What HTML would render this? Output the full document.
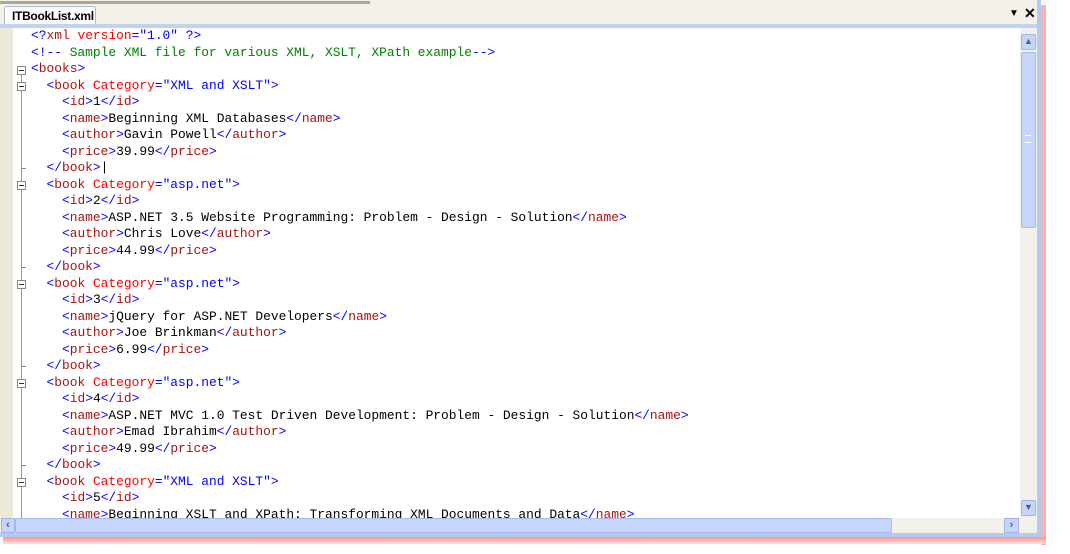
<!DOCTYPE html>
<html><head><meta charset="utf-8"><style>
*{margin:0;padding:0;box-sizing:border-box}
body{width:1070px;height:554px;background:#fff;position:relative;overflow:hidden;font-family:"Liberation Sans",sans-serif}
.abs{position:absolute}
#code{position:absolute;left:31px;top:28px;font-family:"Liberation Mono",monospace;font-size:12.9px;line-height:16.5px;white-space:pre;color:#000}
.b{color:#0000ff}.t{color:#a31515}.a{color:#ff0000}.c{color:#008000}
.fold{position:absolute;left:17px;width:9px;height:9px;border:1px solid #888;background:#fff}
.fold:after{content:"";position:absolute;left:1px;top:3px;width:5px;height:1px;background:#333}
.tick{position:absolute;left:21px;width:5px;height:1px;background:#888}
</style></head><body>
<!-- header -->
<div class="abs" style="left:0;top:0;width:1037px;height:25px;background:#f4f2e8"></div>
<div class="abs" style="left:0;top:1px;width:370px;height:3px;background:#aca899"></div>
<div class="abs" style="left:4px;top:6px;width:92px;height:21px;background:#fcfcfe;border:1px solid #a8b8d8;border-bottom:none;border-radius:3px 3px 0 0"></div>
<div class="abs" style="left:12px;top:9px;font-size:12px;font-weight:bold;color:#000;letter-spacing:-0.3px">ITBookList.xml</div>
<div class="abs" style="left:1009px;top:8px;font-size:10px;color:#000">▼</div>
<div class="abs" style="left:1024px;top:5px;font-size:14px;font-weight:bold;color:#000">✕</div>
<div class="abs" style="left:0;top:24px;width:1037px;height:4px;background:#c2d3f0"></div>
<!-- gutter -->
<div class="abs" style="left:0;top:28px;width:13px;height:490px;background:#ece9d8"></div>
<div class="abs" style="left:21px;top:75px;width:1px;height:443px;background:#999"></div>
<div class="fold" style="top:66px;left:17px"></div>
<div class="fold" style="top:82px"></div>
<div class="tick" style="top:168px"></div>
<div class="fold" style="top:181px"></div>
<div class="tick" style="top:267px"></div>
<div class="fold" style="top:280px"></div>
<div class="tick" style="top:366px"></div>
<div class="fold" style="top:379px"></div>
<div class="tick" style="top:465px"></div>
<div class="fold" style="top:478px"></div>
<div id="code"><span class="b">&lt;?</span><span class="t">xml</span> <span class="a">version</span><span class="b">="1.0" ?&gt;</span>
<span class="b">&lt;!--</span><span class="c"> Sample XML file for various XML, XSLT, XPath example</span><span class="b">--&gt;</span>
<span class="b">&lt;</span><span class="t">books</span><span class="b">&gt;</span>
  <span class="b">&lt;</span><span class="t">book</span> <span class="a">Category</span><span class="b">="XML and XSLT"&gt;</span>
    <span class="b">&lt;</span><span class="t">id</span><span class="b">&gt;</span>1<span class="b">&lt;/</span><span class="t">id</span><span class="b">&gt;</span>
    <span class="b">&lt;</span><span class="t">name</span><span class="b">&gt;</span>Beginning XML Databases<span class="b">&lt;/</span><span class="t">name</span><span class="b">&gt;</span>
    <span class="b">&lt;</span><span class="t">author</span><span class="b">&gt;</span>Gavin Powell<span class="b">&lt;/</span><span class="t">author</span><span class="b">&gt;</span>
    <span class="b">&lt;</span><span class="t">price</span><span class="b">&gt;</span>39.99<span class="b">&lt;/</span><span class="t">price</span><span class="b">&gt;</span>
  <span class="b">&lt;/</span><span class="t">book</span><span class="b">&gt;</span>|
  <span class="b">&lt;</span><span class="t">book</span> <span class="a">Category</span><span class="b">="asp.net"&gt;</span>
    <span class="b">&lt;</span><span class="t">id</span><span class="b">&gt;</span>2<span class="b">&lt;/</span><span class="t">id</span><span class="b">&gt;</span>
    <span class="b">&lt;</span><span class="t">name</span><span class="b">&gt;</span>ASP.NET 3.5 Website Programming: Problem - Design - Solution<span class="b">&lt;/</span><span class="t">name</span><span class="b">&gt;</span>
    <span class="b">&lt;</span><span class="t">author</span><span class="b">&gt;</span>Chris Love<span class="b">&lt;/</span><span class="t">author</span><span class="b">&gt;</span>
    <span class="b">&lt;</span><span class="t">price</span><span class="b">&gt;</span>44.99<span class="b">&lt;/</span><span class="t">price</span><span class="b">&gt;</span>
  <span class="b">&lt;/</span><span class="t">book</span><span class="b">&gt;</span>
  <span class="b">&lt;</span><span class="t">book</span> <span class="a">Category</span><span class="b">="asp.net"&gt;</span>
    <span class="b">&lt;</span><span class="t">id</span><span class="b">&gt;</span>3<span class="b">&lt;/</span><span class="t">id</span><span class="b">&gt;</span>
    <span class="b">&lt;</span><span class="t">name</span><span class="b">&gt;</span>jQuery for ASP.NET Developers<span class="b">&lt;/</span><span class="t">name</span><span class="b">&gt;</span>
    <span class="b">&lt;</span><span class="t">author</span><span class="b">&gt;</span>Joe Brinkman<span class="b">&lt;/</span><span class="t">author</span><span class="b">&gt;</span>
    <span class="b">&lt;</span><span class="t">price</span><span class="b">&gt;</span>6.99<span class="b">&lt;/</span><span class="t">price</span><span class="b">&gt;</span>
  <span class="b">&lt;/</span><span class="t">book</span><span class="b">&gt;</span>
  <span class="b">&lt;</span><span class="t">book</span> <span class="a">Category</span><span class="b">="asp.net"&gt;</span>
    <span class="b">&lt;</span><span class="t">id</span><span class="b">&gt;</span>4<span class="b">&lt;/</span><span class="t">id</span><span class="b">&gt;</span>
    <span class="b">&lt;</span><span class="t">name</span><span class="b">&gt;</span>ASP.NET MVC 1.0 Test Driven Development: Problem - Design - Solution<span class="b">&lt;/</span><span class="t">name</span><span class="b">&gt;</span>
    <span class="b">&lt;</span><span class="t">author</span><span class="b">&gt;</span>Emad Ibrahim<span class="b">&lt;/</span><span class="t">author</span><span class="b">&gt;</span>
    <span class="b">&lt;</span><span class="t">price</span><span class="b">&gt;</span>49.99<span class="b">&lt;/</span><span class="t">price</span><span class="b">&gt;</span>
  <span class="b">&lt;/</span><span class="t">book</span><span class="b">&gt;</span>
  <span class="b">&lt;</span><span class="t">book</span> <span class="a">Category</span><span class="b">="XML and XSLT"&gt;</span>
    <span class="b">&lt;</span><span class="t">id</span><span class="b">&gt;</span>5<span class="b">&lt;/</span><span class="t">id</span><span class="b">&gt;</span>
    <span class="b">&lt;</span><span class="t">name</span><span class="b">&gt;</span>Beginning XSLT and XPath: Transforming XML Documents and Data<span class="b">&lt;/</span><span class="t">name</span><span class="b">&gt;</span></div>
<!-- vertical scrollbar -->
<div class="abs" style="left:1020px;top:28px;width:17px;height:490px;background:#f3f1ec"></div>
<div class="abs" style="left:1021px;top:34px;width:15px;height:16px;background:#c4d4fa;border:1px solid #9fb4e4;border-radius:2px;color:#4d6185;font-size:9px;text-align:center;line-height:13px">▲</div>
<div class="abs" style="left:1021px;top:52px;width:15px;height:176px;background:#c5d5fb;border:1px solid #a8bbe8;border-radius:2px"></div>
<div class="abs" style="left:1025px;top:135px;width:6px;height:8px;border-top:1px solid #fff;border-bottom:1px solid #fff"></div>
<div class="abs" style="left:1021px;top:500px;width:15px;height:16px;background:#c4d4fa;border:1px solid #9fb4e4;border-radius:2px;color:#4d6185;font-size:9px;text-align:center;line-height:13px">▼</div>
<!-- horizontal scrollbar -->
<div class="abs" style="left:0;top:518px;width:1037px;height:16px;background:#f3f1ec"></div>
<div class="abs" style="left:1px;top:518px;width:14px;height:15px;background:#c4d4fa;border:1px solid #9fb4e4;color:#4d6185;font-size:11px;font-weight:bold;text-align:center;line-height:13px">‹</div>
<div class="abs" style="left:15px;top:518px;width:877px;height:15px;background:#c5d5fb;border:1px solid #a8bbe8;border-radius:2px"></div>
<div class="abs" style="left:1004px;top:518px;width:15px;height:15px;background:#c4d4fa;border:1px solid #9fb4e4;color:#4d6185;font-size:11px;font-weight:bold;text-align:center;line-height:13px">›</div>
<!-- borders -->
<div class="abs" style="left:1037px;top:0;width:4px;height:537px;background:#b7c9ee"></div>
<div class="abs" style="left:0;top:533px;width:1041px;height:4px;background:#b7c9ee"></div>
<div class="abs" style="left:1041px;top:5px;width:5px;height:540px;background:#ff9c9c;opacity:.8"></div>
<div class="abs" style="left:3px;top:537px;width:1043px;height:7px;background:linear-gradient(#ff8f8f,#ffe0e0)"></div>
</body></html>
